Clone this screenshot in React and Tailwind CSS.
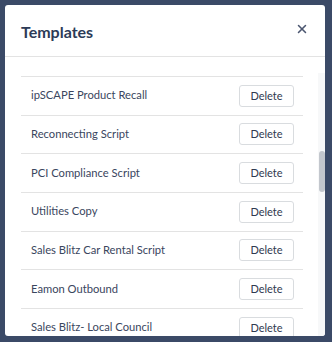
import { X } from "lucide-react";

const templates = [
    "ipSCAPE Product Recall",
    "Reconnecting Script",
    "PCI Compliance Script",
    "Utilities Copy",
    "Sales Blitz Car Rental Script",
    "Eamon Outbound",
    "Sales Blitz- Local Council",
];

export default function App() {
    return (
        <div
            className="w-[332px] h-[342px] bg-[#3b4a67] pl-[5px] pr-[7px] pt-[5px] overflow-hidden"
            style={{ fontFamily: "Lato, 'Open Sans', sans-serif" }}
        >
            <div className="h-[331px] bg-white rounded-[3px] overflow-hidden flex flex-col">
                <div className="h-[52px] shrink-0 flex items-center justify-between pl-4 pr-[16px] border-b border-[#e3e3e3]">
                    <h2 className="text-[16px] font-bold text-[#2c3b57] pt-[2px]">
                        Templates
                    </h2>
                    <button className="text-[#4b5670] -mt-[4px]">
                        <X size={14} strokeWidth={2.6} />
                    </button>
                </div>

                <div className="flex flex-1 min-h-0">
                    <div className="flex-1 pl-4 pr-[15px] pt-[19px]">
                        {templates.map((name) => (
                            <div
                                key={name}
                                className="h-[38.67px] flex items-center justify-between border-t border-[#e3e3e3] pl-[10px] pr-[9px]"
                            >
                                <span className="text-[11.2px] text-[#3a465e]">
                                    {name}
                                </span>
                                <button className="w-[55px] h-[22px] border border-[#d9dcdf] rounded-[3px] text-[11px] text-[#2f3a4f] bg-white">
                                    Delete
                                </button>
                            </div>
                        ))}
                    </div>
                    <div className="w-[7px] mt-[16px] bg-[#f7f8f9]">
                        <div className="mt-[78px] h-[41px] w-[6px] ml-[1px] rounded-[3px] bg-[#c3c7cd]" />
                    </div>
                </div>
            </div>
        </div>
    );
}
